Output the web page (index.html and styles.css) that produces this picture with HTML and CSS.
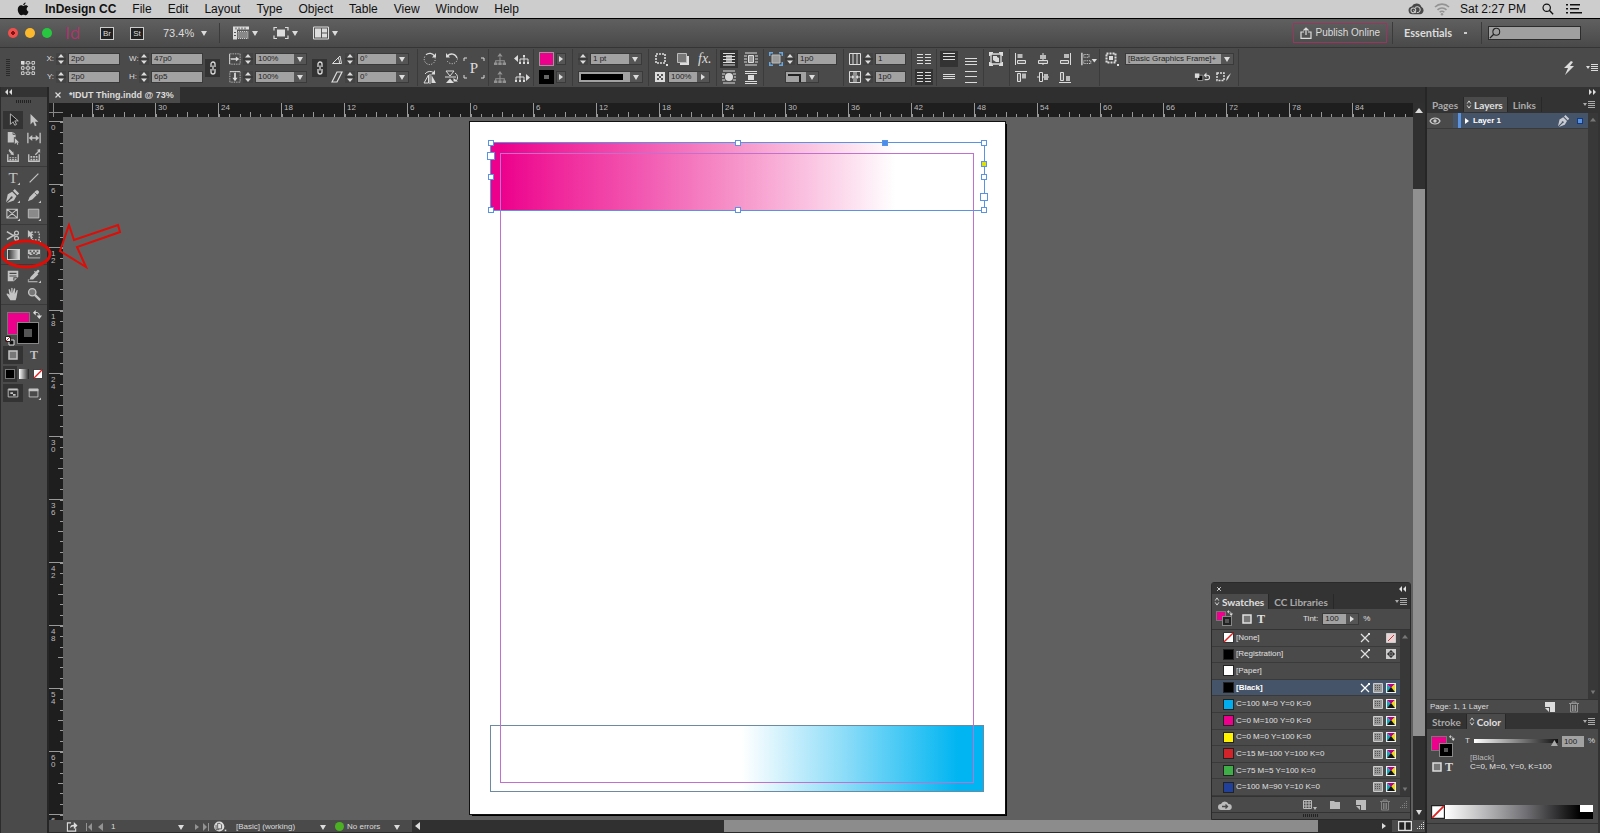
FILE: index.html
```html
<!DOCTYPE html>
<html lang="en">
<head>
    <meta charset="UTF-8">
    <meta name="viewport" content="width=device-width, initial-scale=1.0">
    <title>IDUT Thing.indd</title>
    <link rel="stylesheet" href="styles.css">
</head>
<body>

<!-- icon set -->
<svg class="sprite" aria-hidden="true">
    <symbol id="apple" viewBox="0 0 16 16"><path d="M11 .5c.1 1.600-1.300 3-2.800 3C8 2 9.500.7 11 .5zM8.300 4.500c.7 0 1.500-.8 2.900-.8 1.200 0 2.200.7 2.700 1.500-2.500 1.400-2.100 4.800.4 5.800-.6 1.800-2 4.200-3.300 4.200-.9 0-1.300-.6-2.500-.6s-1.600.6-2.500.6C4 15.200 2 11.700 2 8.700c0-3 1.900-4.900 3.800-4.900 1.100 0 1.800.7 2.500.7z"/></symbol>
    <symbol id="cc" viewBox="0 0 18 14"><path d="M5 13a4.500 4.500 0 0 1-.8-8.900A6 6 0 0 1 15 4.500 4.500 4.500 0 0 1 13.500 13z"/><g fill="none" stroke="#cdcdcd" stroke-width="1.200"><circle cx="6" cy="8.500" r="2.700"/><path d="M6 8.500l3 2.500M8 5.500a3.300 3.300 0 1 1 2 5.500"/></g></symbol>
    <symbol id="wifi" viewBox="0 0 16 13"><g fill="none" stroke="currentColor" stroke-width="1.600"><path d="M1 4.500a10 10 0 0 1 14 0M3.500 7.300a6.500 6.500 0 0 1 9 0M5.700 9.800a3.200 3.200 0 0 1 4.600 0"/></g><circle cx="8" cy="11.800" r="1.200"/></symbol>
    <symbol id="lens" viewBox="0 0 14 14"><circle cx="5.500" cy="5.500" r="4.300" fill="none" stroke="currentColor" stroke-width="1.400"/><path d="M8.500 8.500l4.500 4.500" stroke="currentColor" stroke-width="1.600"/></symbol>
    <symbol id="lens-left" viewBox="0 0 14 14"><circle cx="8.500" cy="5.500" r="4" fill="none" stroke="currentColor" stroke-width="1.200"/><path d="M5.500 8.500L1 13" stroke="currentColor" stroke-width="1.500"/></symbol>
    <symbol id="list" viewBox="0 0 16 12"><path d="M0 1h2v1.500H0zM4 1h10v1.500H4zM0 5h2v1.500H0zM4 5h9v1.500H4zM0 9h2v1.500H0zM4 9h12v1.500H4z"/></symbol>
    <symbol id="view-opts" viewBox="0 0 16 13"><path d="M0 0h16v3H4v10H0z"/><path d="M3 3v-2M6 3V1M9 3V1M12 3V1M1 6h2M1 9h2" stroke="#555"/><path d="M5 5h10v7H5z" fill="#888" stroke="#ccc" stroke-dasharray="1 1"/></symbol>
    <symbol id="screen-mode" viewBox="0 0 16 13"><path d="M4 3h8v7H4z"/><path d="M1 4V1h3M12 1h3v3M15 9v3h-3M4 12H1V9" fill="none" stroke="currentColor" stroke-width="1.200"/></symbol>
    <symbol id="arrange" viewBox="0 0 16 13"><path d="M.5.500h15v12H.5z" fill="none" stroke="currentColor"/><path d="M2 2h6v9H2zM9 2h5v4H9zM9 7h5v4H9z"/></symbol>
    <symbol id="share" viewBox="0 0 12 12"><path d="M4 5H1v6.300h10V5H8M6 8V1M3.500 3.500L6 1l2.500 2.500" fill="none" stroke="currentColor" stroke-width="1.200"/></symbol>
    <symbol id="export" viewBox="0 0 12 12"><path d="M5 2H1v9h9V8" fill="none" stroke="currentColor" stroke-width="1.200"/><path d="M4 8c0-3 1-4 4-4V1l4 4-4 4V6C6 6 5 6.500 4 8z"/></symbol>
    <symbol id="refpoint" viewBox="0 0 16 16"><g fill="none" stroke="currentColor"><path d="M2.500 2.500h11v11h-11zM2.500 8h11M8 2.500v11" stroke-dasharray="1 1"/><path d="M6.500.500h3v3h-3zM12.500.500h3v3h-3zM.5 6.500h3v3h-3zM6.500 6.500h3v3h-3zM12.500 6.500h3v3h-3zM.5 12.500h3v3h-3zM6.500 12.500h3v3h-3zM12.500 12.500h3v3h-3z" fill="#4a4a4a"/></g><path d="M0 0h4v4H0z"/></symbol>
    <symbol id="spin" viewBox="0 0 10 12"><path d="M5 1l3 3.500H2zM5 11L2 7.500h6z"/><path d="M0 6h10" stroke="#333"/></symbol>
    <symbol id="down" viewBox="0 0 8 8"><path d="M1 2h6L4 7z"/></symbol>
    <symbol id="up" viewBox="0 0 8 8"><path d="M0 6h8L4 1z"/></symbol>
    <symbol id="right" viewBox="0 0 8 8"><path d="M2 1v6l4-3z"/></symbol>
    <symbol id="left" viewBox="0 0 8 8"><path d="M6 0v8L1 4z"/></symbol>
    <symbol id="first" viewBox="0 0 8 8"><path d="M1 0h1v8H1zM7 0v8L3 4z"/></symbol>
    <symbol id="last" viewBox="0 0 8 8"><path d="M6 0h1v8H6zM1 0v8l4-4z"/></symbol>
    <symbol id="chain" viewBox="0 0 8 14"><g fill="none" stroke="currentColor" stroke-width="1.300"><path d="M2 6V3a2 2 0 0 1 4 0v3M2 8v3a2 2 0 0 0 4 0V8M4 4.500v5"/></g></symbol>
    <symbol id="scale-x" viewBox="0 0 14 14"><path d="M.5 1v12" stroke="currentColor"/><path d="M1 1h12v12H1z" fill="none" stroke="currentColor" stroke-dasharray="1 1"/><path d="M2 6h6V4l4 3-4 3V8H2z"/></symbol>
    <symbol id="scale-y" viewBox="0 0 14 14"><path d="M1 .5h12" stroke="currentColor"/><path d="M1 1h12v12H1z" fill="none" stroke="currentColor" stroke-dasharray="1 1"/><path d="M6 2v6H4l3 4 3-4H8V2z"/></symbol>
    <symbol id="angle" viewBox="0 0 12 12"><path d="M10.500 10.500h-9L9 3zM7 5a7 7 0 0 1 1.500 5" fill="none" stroke="currentColor"/></symbol>
    <symbol id="shear" viewBox="0 0 12 12"><path d="M1 11L6 1h5L6 11z" fill="none" stroke="currentColor" stroke-width="1.200"/></symbol>
    <symbol id="rot-cw" viewBox="0 0 14 14"><path d="M3 2.800A5.500 5.500 0 0 1 11.500 4" fill="none" stroke="currentColor" stroke-width="1.300"/><path d="M12 5.500a5.500 5.500 0 1 1-9.500-2" fill="none" stroke="currentColor" stroke-dasharray="1 1.500"/><path d="M13 1v4.500H9z"/></symbol>
    <symbol id="rot-ccw" viewBox="0 0 14 14"><path d="M2.500 4A5.500 5.500 0 0 1 12 6" fill="none" stroke="currentColor" stroke-width="1.300"/><path d="M12.500 6.500a5.500 5.500 0 0 1-10.500 2" fill="none" stroke="currentColor" stroke-dasharray="1 1.500"/><path d="M1 1v4.500h4z"/></symbol>
    <symbol id="flip-h" viewBox="0 0 14 14"><path d="M5.500 5v8H1zM7 4v10" fill="none" stroke="currentColor"/><path d="M8.500 5v8H13z"/><path d="M2 4a6 6 0 0 1 9-1" fill="none" stroke="currentColor"/><path d="M12 0v4.500H8z"/></symbol>
    <symbol id="flip-v" viewBox="0 0 14 14"><path d="M1 1h8L5 6zM0 7h11" fill="none" stroke="currentColor"/><path d="M1 13h8L5 8.500z"/><path d="M10 3a5 5 0 0 1 1 8" fill="none" stroke="currentColor"/><path d="M13 11.500H8.500V8z"/></symbol>
    <symbol id="flip-frame" viewBox="0 0 22 22"><path d="M1 4V1h3M18 1h3v3M21 18v3h-3M4 21H1v-3" fill="none" stroke="currentColor"/></symbol>
    <symbol id="tree" viewBox="0 0 14 14"><path d="M7 5v4M2 12V9h10v3M7 9v3" fill="none" stroke="currentColor" stroke-width="1.200"/><path d="M7 0l3 4H4zM0 11h4v3H0zM5 11h4v3H5zM10 11h4v3h-4z"/></symbol>
    <symbol id="tree-prev" viewBox="0 0 16 12"><path d="M10 3v3M6 9V6h8v3M10 6v3" fill="none" stroke="currentColor"/><path d="M4 2v7L0 5.500zM9 2h2v2H9zM5 9h2v2H5zM9 9h2v2H9zM13 9h2v2h-2z"/></symbol>
    <symbol id="tree-next" viewBox="0 0 16 12"><path d="M6 3v3M2 9V6h8v3M6 6v3" fill="none" stroke="currentColor"/><path d="M12 3v7l4-3.500zM5 2h2v2H5zM1 9h2v2H1zM5 9h2v2H5zM9 9h2v2H9z"/></symbol>
    <symbol id="corner" viewBox="0 0 14 14"><path d="M2 2h9v9H2z" fill="none" stroke="currentColor" stroke-width="1.600" stroke-dasharray="2 1"/><path d="M12 12h2v2h-2z"/></symbol>
    <symbol id="shadow" viewBox="0 0 14 14"><path d="M4 4h9v9H4z" fill="#ddd"/><path d="M1.500 1.500h9v9h-9z" fill="#777" stroke="#bbb"/></symbol>
    <symbol id="checker" viewBox="0 0 12 12"><path d="M1 1h10v10H1z"/><path d="M3 3h2v2H3zM7 3h2v2H7zM5 5h2v2H5zM3 7h2v2H3zM7 7h2v2H7z" fill="#555"/></symbol>
    <symbol id="wrap-none" viewBox="0 0 14 14"><path d="M1 1.500h12M1 4.500h12M1 7.500h12M1 10.500h12M1 13h12" stroke="currentColor"/><path d="M4 3h6v8H4z" opacity=".7"/></symbol>
    <symbol id="wrap-box" viewBox="0 0 14 14"><path d="M1 1h12M1 13h12M0 4h3M0 7h3M0 10h3M11 4h3M11 7h3M11 10h3" stroke="currentColor"/><path d="M4.500 3.500h5v7h-5z" fill="#999" stroke="currentColor"/></symbol>
    <symbol id="wrap-shape" viewBox="0 0 14 14"><path d="M1 1h12M1 13h12M0 4h3M0 7h2M0 10h3M11 4h3M12 7h2M11 10h3" stroke="currentColor"/><circle cx="7" cy="7" r="4"/></symbol>
    <symbol id="wrap-jump" viewBox="0 0 14 14"><path d="M1 1.500h12M1 3.500h12M1 11.500h12M1 13.500h12" stroke="currentColor"/><path d="M4 5h6v5H4z"/></symbol>
    <symbol id="frame-fit" viewBox="0 0 14 14"><path d="M3 3h8v8H3z" fill="#999" stroke="#bbb"/><path d="M0 0h4v1.500H1.500V4H0zM10 0h4v4h-1.500V1.500H10zM0 10h1.500v2.500H4V14H0zM12.500 10H14v4h-4v-1.500h2.500z" fill="#6aa6dc"/></symbol>
    <symbol id="cols" viewBox="0 0 12 12"><path d="M.5.500h11v11H.5zM4 0v12M8 0v12" fill="none" stroke="currentColor"/></symbol>
    <symbol id="gutter" viewBox="0 0 12 12"><path d="M.5.500h11v11H.5zM5 0v12M7 0v12M1 6h4M7 6h4" fill="none" stroke="currentColor"/><path d="M3 4v4l2-2zM9 4v4L7 6z"/></symbol>
    <symbol id="para" viewBox="0 0 14 12"><path d="M0 1.500h6M0 4.500h6M0 7.500h6M0 10.500h6M8 1.500h6M8 4.500h6M8 7.500h6M8 10.500h6" stroke="currentColor"/></symbol>
    <symbol id="v-top" viewBox="0 0 14 12"><path d="M1 .5h12M1 3.500h12M1 6.500h12" stroke="currentColor"/></symbol>
    <symbol id="v-mid" viewBox="0 0 14 12"><path d="M1 3.500h12M1 5.500h12M1 7.500h12" stroke="currentColor"/></symbol>
    <symbol id="v-bot" viewBox="0 0 14 12"><path d="M1 5.500h12M1 8.500h12M1 11.500h12" stroke="currentColor"/></symbol>
    <symbol id="v-just" viewBox="0 0 14 12"><path d="M1 .5h12M1 5.500h12M1 11.500h12" stroke="currentColor"/></symbol>
    <symbol id="fit" viewBox="0 0 14 14"><path d="M2 2h10v10H2z" fill="none" stroke="currentColor" stroke-width="1.300"/><path d="M0 0h4v1L1 4H0zM10 0h4v4h-1l-3-3zM0 10h1l3 3v1H0zM13 10h1v4h-4v-1zM4 4h4v1l2 1v4H7L4 8z"/></symbol>
    <symbol id="al-left" viewBox="0 0 12 12"><path d="M.5 0v12" stroke="currentColor"/><path d="M2.500 1h5v4h-5z" fill="#bbb"/><path d="M2.500 7.500h8v3h-8z" fill="#666" stroke="currentColor"/></symbol>
    <symbol id="al-mid" viewBox="0 0 12 12"><path d="M6 0v12" stroke="currentColor"/><path d="M3 2h6v4H3z" fill="#bbb"/><path d="M1.500 7.500h9v3h-9z" fill="#666" stroke="currentColor"/></symbol>
    <symbol id="al-right" viewBox="0 0 12 12"><path d="M11.500 0v12" stroke="currentColor"/><path d="M5 1h5v4H5z" fill="#bbb"/><path d="M1.500 7.500h8v3h-8z" fill="#666" stroke="currentColor"/></symbol>
    <symbol id="al-top" viewBox="0 0 12 12"><path d="M0 .5h12" stroke="currentColor"/><path d="M7 2.500h4v5H7z" fill="#bbb"/><path d="M2.500 2.500h3v8h-3z" fill="#666" stroke="currentColor"/></symbol>
    <symbol id="al-center" viewBox="0 0 12 12"><path d="M0 6h12" stroke="currentColor"/><path d="M7 3h4v6H7z" fill="#bbb"/><path d="M2.500 1.500h3v9h-3z" fill="#444" stroke="currentColor"/></symbol>
    <symbol id="al-bot" viewBox="0 0 12 12"><path d="M0 11.500h12" stroke="currentColor"/><path d="M7 5h4v5H7z" fill="#bbb"/><path d="M1.500 1.500h3v8h-3z" fill="#666" stroke="currentColor"/></symbol>
    <symbol id="al-to" viewBox="0 0 18 14"><path d="M1 0v14" stroke="currentColor" stroke-width="1.500"/><path d="M3 2h6v3H3zM3 9h8v3H3z" fill="none" stroke="currentColor" stroke-width="1.200" stroke-dasharray="1 1"/><path d="M12 7h6l-3 4z"/></symbol>
    <symbol id="obj-style" viewBox="0 0 14 14"><path d="M1.500 1.500h9v9h-9z" fill="none" stroke="currentColor" stroke-width="2" stroke-dasharray="2 1"/><path d="M4 4h4v4H4zM12 12h2v2h-2z"/></symbol>
    <symbol id="clear-style" viewBox="0 0 18 10"><path d="M4 3h6v6H4z" fill="#111" stroke="#999"/><path d="M1 1h5v5H1z"/><path d="M12 3h3a2.200 2.200 0 0 1 0 5h-3" fill="none" stroke="currentColor" stroke-width="1.300"/><path d="M14 0v6l-3-3z"/></symbol>
    <symbol id="break-style" viewBox="0 0 16 10"><path d="M1 1h7v7.500H1z" fill="none" stroke="currentColor" stroke-width="1.500" stroke-dasharray="2 1"/><path d="M15 1l-3 6-2 2 1-4z"/></symbol>
    <symbol id="bolt" viewBox="0 0 12 14"><path d="M8 0L1 7h4l-3 7 9-9H7l3-4z"/></symbol>
    <symbol id="flyout" viewBox="0 0 12 8"><path d="M0 2h4L2 5zM5 0h7v1H5zM5 2h7v1H5zM5 4h7v1H5zM5 6h7v1H5z"/></symbol>
    <symbol id="collapse" viewBox="0 0 8 6"><path d="M3 0v6L0 3zM7 0v6L4 3z"/></symbol>
    <symbol id="expand" viewBox="0 0 8 6"><path d="M1 0v6l3-3zM5 0v6l3-3z"/></symbol>
    <symbol id="updown" viewBox="0 0 6 10"><path d="M1 4l2-3 2 3M1 6l2 3 2-3" fill="none" stroke="currentColor"/></symbol>
    <symbol id="close" viewBox="0 0 8 8"><path d="M1.500 1.500l5 5M6.500 1.500l-5 5" stroke="currentColor" stroke-width="1.200"/></symbol>

    <symbol id="t-select" viewBox="0 0 16 16"><path d="M5 1v12l3-3 2 4 2-1-2-4h4z" fill="#222" stroke="currentColor"/></symbol>
    <symbol id="t-direct" viewBox="0 0 16 16"><path d="M4 1v12l3-3 2 5 2-1-2-4h4z"/></symbol>
    <symbol id="t-page" viewBox="0 0 16 16"><path d="M2 1h6l3 3v3H9v6H2z"/><path d="M8 1v3h3" fill="none" stroke="#555"/><path d="M10 8v7l2-2 1 3 1-1-1-2h2z"/></symbol>
    <symbol id="t-gap" viewBox="0 0 16 16"><path d="M1 2v12M15 2v12M4 8h8" stroke="currentColor" stroke-width="1.500"/><path d="M2 8l4-3.500v7zM14 8l-4-3.500v7z"/></symbol>
    <symbol id="t-collect" viewBox="0 0 16 16"><path d="M2 6v8h12V6" fill="none" stroke="currentColor" stroke-width="1.500"/><path d="M4 9h2v1H4zM7 9h2v1H7zM10 9h2v1h-2zM4 11h2v2H4zM7 11h2v2H7zM10 11h2v2h-2zM4 0l4 4V2l1 5-5-1h2L3 2z"/></symbol>
    <symbol id="t-place" viewBox="0 0 16 16"><path d="M2 6v8h12V6" fill="none" stroke="currentColor" stroke-width="1.500"/><path d="M4 8h2v2H4zM7 8h2v2H7zM10 8h2v2h-2zM4 11h2v2H4zM7 11h2v2H7zM10 11h2v2h-2zM15 0v5l-1-2-4 4-1-1 4-4-2-1z"/></symbol>
    <symbol id="corner-mark" viewBox="0 0 16 16"><path d="M16 13v3h-3z"/></symbol>
    <symbol id="t-line" viewBox="0 0 16 16"><path d="M3 13L13 3" stroke="currentColor" stroke-width="1.500"/></symbol>
    <symbol id="t-pen" viewBox="0 0 16 16"><path d="M0 15l2-9 5-3 5 5-3 5-8 3 5-5a1.300 1.300 0 1 0-1-1zM8 2l2-2 5 5-2 2zM16 13v3h-3z"/></symbol>
    <symbol id="pen-nib" viewBox="0 0 16 16"><path d="M0 15l2-9 5-3 5 5-3 5-8 3 5-5a1.300 1.300 0 1 0-1-1zM8 2l2-2 5 5-2 2z"/></symbol>
    <symbol id="t-pencil" viewBox="0 0 16 16"><path d="M1 14l2-5 7-7c2-2 5 1 3 3l-7 7z" /><path d="M8.500 4l3 3" stroke="#555"/><path d="M16 13v3h-3z"/></symbol>
    <symbol id="t-frame" viewBox="0 0 16 16"><path d="M1 2.500h12v10H1zM1 2.500l12 10M13 2.500l-12 10" fill="none" stroke="currentColor" stroke-width="1.200"/><path d="M16 13v3h-3z"/></symbol>
    <symbol id="t-rect" viewBox="0 0 16 16"><path d="M1.500 2.500h12v10h-12z" fill="#8a8a8a" stroke="currentColor"/><path d="M16 13v3h-3z"/></symbol>
    <symbol id="t-scissors" viewBox="0 0 16 16"><path d="M1 3l9 5.500M1 12l9-5.500" stroke="currentColor" stroke-width="1.800"/><g fill="none" stroke="currentColor" stroke-width="1.400"><circle cx="12" cy="4.500" r="2.200"/><circle cx="12" cy="10.500" r="2.200"/></g></symbol>
    <symbol id="t-free" viewBox="0 0 16 16"><path d="M5 3.500h9v9H5z" fill="none" stroke="currentColor" stroke-width="1.500" stroke-dasharray="2 1.500"/><path d="M1 1v9l2-2 2 3 2-1-2-3h3zM16 13v3h-3z"/></symbol>
    <symbol id="t-feather" viewBox="0 0 16 16"><path d="M1 3h14v10H1z"/><path d="M3 4h2v2H3zM7 4h2v2H7zM11 4h2v2h-2zM5 6h2v2H5zM9 6h2v2H9zM1 8h2v2H1zM5 9l2-1h2l2 1 2-1h2v4H2V9z" fill="#555"/></symbol>
    <symbol id="t-note" viewBox="0 0 16 16"><path d="M2 2h12v7l-5 5H2z"/><path d="M4 5h8M4 8h8M9 13v-3h4" fill="none" stroke="#4a4a4a" stroke-width="1.200"/></symbol>
    <symbol id="t-dropper" viewBox="0 0 16 16"><path d="M3 12l1-3 5-5 3 3-5 5zM9 2l1 1 2-2c1-1 3 1 2 2l-2 2 1 1-1 1-4-4zM1 12l2 0-2 2h11v1H1zM16 13v3h-3z"/></symbol>
    <symbol id="t-hand" viewBox="0 0 16 16"><path d="M5 15L1 9c-1-2 1-2 2-1l1 1-1-6c0-1 1.300-1 1.500 0L6 7V1.500c0-1 1.500-1 1.500 0V7L9 2c.3-1 1.600-.7 1.500.3L10 8l2-4c.5-1 1.600-.5 1.300.5L12 12l-1 3z"/></symbol>
    <symbol id="t-zoom" viewBox="0 0 16 16"><circle cx="6" cy="6" r="4.200" fill="#777" stroke="currentColor" stroke-width="1.500"/><path d="M9 9l6 6" stroke="currentColor" stroke-width="2.600"/></symbol>
    <symbol id="swap" viewBox="0 0 10 10"><path d="M2 3c4-1 5 1 5 4" fill="none" stroke="currentColor"/><path d="M0 3l3-3v6zM4 6h6L7 10z"/></symbol>
    <symbol id="small-swatch" viewBox="0 0 10 10"><path d="M4 4h5v5H4z" fill="#111" stroke="#ddd"/><path d="M.5.500h5v5h-5z" fill="#fff" stroke="#222"/><path d="M1 5l4-4" stroke="#d22"/></symbol>
    <symbol id="box" viewBox="0 0 12 12"><path d="M2 2h8v8H2z" fill="#777" stroke="currentColor" stroke-width="1.500"/></symbol>
    <symbol id="none" viewBox="0 0 12 12"><path d="M.5.500h11v11H.5z" fill="#fff" stroke="#222"/><path d="M1 11L11 1" stroke="#d22" stroke-width="1.600"/></symbol>
    <symbol id="mode-normal" viewBox="0 0 16 16"><path d="M2.500 3.500h11v9h-11z" fill="none" stroke="currentColor"/><path d="M3 3h10v2H3zM5 7h3v2H5zM8 9h3v2H8z"/></symbol>
    <symbol id="mode-preview" viewBox="0 0 16 16"><path d="M2.500 3.500h10v9h-10z" fill="none" stroke="currentColor"/><path d="M2 3h11v3H2zM16 13v3h-3z"/></symbol>

    <symbol id="eye" viewBox="0 0 12 10"><path d="M1 5c2-4 8-4 10 0-2 4-8 4-10 0z" fill="none" stroke="currentColor" stroke-width="1.200"/><circle cx="6" cy="5" r="1.700"/></symbol>
    <symbol id="new" viewBox="0 0 12 10"><path d="M1 0h10v10H6V5H1z"/><path d="M1 6h4v4z"/></symbol>
    <symbol id="trash" viewBox="0 0 12 12"><path d="M1 2.500h10M4 2V1h4v1M2.500 3v8h7V3M4.500 4v6M6 4v6M7.500 4v6" fill="none" stroke="currentColor"/></symbol>
    <symbol id="cloud" viewBox="0 0 14 10"><path d="M3 10a3 3 0 0 1 0-6 4 4 0 0 1 7.500 0A3 3 0 0 1 11 10z"/><path d="M4 6.500h5M7.500 4.500l2 2-2 2" fill="none" stroke="#4a4a4a" stroke-width="1.300"/></symbol>
    <symbol id="grid" viewBox="0 0 14 10"><path d="M.5.500h8v8h-8zM3 0v9M6 0v9M0 3h9M0 6h9" fill="none" stroke="currentColor"/><path d="M10 7h4l-2 3z"/></symbol>
    <symbol id="folder" viewBox="0 0 12 10"><path d="M1 1h4l1 1h5v7H1z"/></symbol>
    <symbol id="no-edit" viewBox="0 0 10 10"><path d="M1 1l8 8M9 1L1 9" stroke="currentColor" stroke-width="1.200"/><path d="M8 0h2v2H8z"/></symbol>
    <symbol id="none-type" viewBox="0 0 10 10"><path d="M.5.500h9v9h-9z" fill="#e8d4d4" stroke="#ccc"/><path d="M2 8l6-6" stroke="#c33"/></symbol>
    <symbol id="registration" viewBox="0 0 10 10"><path d="M0 0h10v10H0z" fill="#ccc"/><circle cx="5" cy="5" r="2.500" fill="none" stroke="#222"/><path d="M5 1v8M1 5h8" stroke="#222"/></symbol>
    <symbol id="process" viewBox="0 0 10 10"><path d="M.5.500h9v9h-9z" fill="#999" stroke="#ccc"/><path d="M2 2.500h6M2 4.500h6M2 6.500h6" stroke="#555" stroke-dasharray="1 1"/></symbol>
    <symbol id="cmyk" viewBox="0 0 10 10"><path d="M0 0h10v10H0z" fill="#eee"/><path d="M1 1l4 4-4 4z" fill="#1ab"/><path d="M1 1h8L5 5z" fill="#b08"/><path d="M9 1v8L5 5z" fill="#ed0"/><path d="M1 9h8L5 4z" fill="#111"/></symbol>
    <symbol id="doc-sync" viewBox="0 0 16 14"><circle cx="7" cy="7" r="6.500"/><path d="M5 3h3l2 2v5H5zM3 5v6h4" fill="none" stroke="#444"/><path d="M14 11h2v2h-2z"/></symbol>
    <symbol id="split" viewBox="0 0 14 10"><path d="M.5.500h13v9H.5zM7 0v10" fill="#222" stroke="currentColor" stroke-width="1.500"/></symbol>
    <symbol id="grip" viewBox="0 0 8 8"><path d="M6 0h1v1H6zM4 2h1v1H4zM6 2h1v1H6zM2 4h1v1H2zM4 4h1v1H4zM6 4h1v1H6zM0 6h1v1H0zM2 6h1v1H2zM4 6h1v1H4zM6 6h1v1H6z"/></symbol>
</svg>

<header class="menubar">
    <svg class="icon apple"><use href="#apple"/></svg>
    <nav>
        <a class="app" href="#">InDesign CC</a>
        <a href="#">File</a>
        <a href="#">Edit</a>
        <a href="#">Layout</a>
        <a href="#">Type</a>
        <a href="#">Object</a>
        <a href="#">Table</a>
        <a href="#">View</a>
        <a href="#">Window</a>
        <a href="#">Help</a>
    </nav>
    <div class="tray">
        <svg class="icon dim"><use href="#cc"/></svg>
        <svg class="icon pale"><use href="#wifi"/></svg>
        <span>Sat 2:27 PM</span>
        <svg class="icon s12"><use href="#lens"/></svg>
        <svg class="icon"><use href="#list"/></svg>
    </div>
</header>

<div class="appbar">
    <div class="lights"><i class="red"></i><i class="amber"></i><i class="green"></i></div>
    <span class="logo">Id</span>
    <button class="bridge">Br</button>
    <button class="bridge">St</button>
    <label class="zoom"><select aria-label="Zoom level"><option>73.4%</option></select><svg class="icon s8"><use href="#down"/></svg></label>
    <div class="views">
        <button aria-label="View options"><svg class="icon"><use href="#view-opts"/></svg><svg class="icon s8"><use href="#down"/></svg></button>
        <button aria-label="Screen mode"><svg class="icon"><use href="#screen-mode"/></svg><svg class="icon s8"><use href="#down"/></svg></button>
        <button aria-label="Arrange documents"><svg class="icon"><use href="#arrange"/></svg><svg class="icon s8"><use href="#down"/></svg></button>
    </div>
    <button class="publish"><svg class="icon s12"><use href="#share"/></svg>Publish Online</button>
    <button class="workspace">Essentials<i></i></button>
    <label class="search"><svg class="icon s12"><use href="#lens-left"/></svg><input type="text" aria-label="Search"></label>
</div>

<div class="control">
    <div class="group mid"><i class="handle"></i></div>
    <div class="group mid"><svg class="icon"><use href="#refpoint"/></svg></div>
    <div class="group">
        <div class="row"><label for="x">X:</label><button class="spin" aria-label="Step X"><svg><use href="#spin"/></svg></button><input id="x" value="2p0"></div>
        <div class="row"><label for="y">Y:</label><button class="spin" aria-label="Step Y"><svg><use href="#spin"/></svg></button><input id="y" value="2p0"></div>
    </div>
    <div class="group">
        <div class="row"><label for="w">W:</label><button class="spin" aria-label="Step W"><svg><use href="#spin"/></svg></button><input id="w" value="47p0"></div>
        <div class="row"><label for="h">H:</label><button class="spin" aria-label="Step H"><svg><use href="#spin"/></svg></button><input id="h" value="6p5"></div>
    </div>
    <div class="group mid"><button class="chain" aria-label="Constrain size"><svg><use href="#chain"/></svg></button></div>
    <div class="group">
        <div class="row"><svg class="icon s12"><use href="#scale-x"/></svg><button class="spin" aria-label="Step scale X"><svg><use href="#spin"/></svg></button><span class="combo"><select aria-label="Scale X"><option>100%</option></select><svg><use href="#down"/></svg></span></div>
        <div class="row"><svg class="icon s12"><use href="#scale-y"/></svg><button class="spin" aria-label="Step scale Y"><svg><use href="#spin"/></svg></button><span class="combo"><select aria-label="Scale Y"><option>100%</option></select><svg><use href="#down"/></svg></span></div>
    </div>
    <div class="group mid"><button class="chain" aria-label="Constrain scale"><svg><use href="#chain"/></svg></button></div>
    <div class="group">
        <div class="row"><svg class="icon s12"><use href="#angle"/></svg><button class="spin" aria-label="Step rotation"><svg><use href="#spin"/></svg></button><span class="combo"><select aria-label="Rotation"><option>0°</option></select><svg><use href="#down"/></svg></span></div>
        <div class="row"><svg class="icon s12"><use href="#shear"/></svg><button class="spin" aria-label="Step shear"><svg><use href="#spin"/></svg></button><span class="combo"><select aria-label="Shear"><option>0°</option></select><svg><use href="#down"/></svg></span></div>
    </div>
    <div class="group line spread">
        <div class="row"><svg class="icon s14"><use href="#rot-cw"/></svg><svg class="icon s14"><use href="#rot-ccw"/></svg></div>
        <div class="row"><svg class="icon s14"><use href="#flip-h"/></svg><svg class="icon s14"><use href="#flip-v"/></svg></div>
    </div>
    <div class="group mid flip"><svg class="icon s22"><use href="#flip-frame"/></svg><span>P</span></div>
    <div class="group line spread">
        <div class="row"><svg class="icon s12 faint"><use href="#tree"/></svg><svg class="icon"><use href="#tree-prev"/></svg></div>
        <div class="row"><svg class="icon s12 faint"><use href="#tree"/></svg><svg class="icon"><use href="#tree-next"/></svg></div>
    </div>
    <div class="group line">
        <div class="row"><button class="fill" aria-label="Fill"></button><button class="more" aria-label="Fill swatches"><svg><use href="#right"/></svg></button></div>
        <div class="row"><button class="fill stroke" aria-label="Stroke"></button><button class="more" aria-label="Stroke swatches"><svg><use href="#right"/></svg></button></div>
    </div>
    <div class="group line">
        <div class="row"><button class="spin" aria-label="Step weight"><svg><use href="#spin"/></svg></button><span class="combo"><select aria-label="Weight"><option>1 pt</option></select><svg><use href="#down"/></svg></span></div>
        <div class="row"><button class="linetype" aria-label="Stroke type"><i></i><svg><use href="#down"/></svg></button></div>
    </div>
    <div class="group line">
        <div class="row wide"><svg class="icon s14"><use href="#corner"/></svg><svg class="icon s14"><use href="#shadow"/></svg><em>fx.</em></div>
        <div class="row"><svg class="icon s12"><use href="#checker"/></svg><span class="combo short"><select aria-label="Opacity"><option>100%</option></select><svg><use href="#right"/></svg></span></div>
    </div>
    <div class="group line spread">
        <div class="row"><svg class="icon s14 on"><use href="#wrap-none"/></svg><svg class="icon s14"><use href="#wrap-box"/></svg></div>
        <div class="row"><svg class="icon s14"><use href="#wrap-shape"/></svg><svg class="icon s14"><use href="#wrap-jump"/></svg></div>
    </div>
    <div class="group line">
        <div class="row"><svg class="icon s14"><use href="#frame-fit"/></svg><button class="spin" aria-label="Step corner"><svg><use href="#spin"/></svg></button><input class="mid-field" aria-label="Corner size" value="1p0"></div>
        <div class="row end"><button class="cornertype" aria-label="Corner shape"><i></i><svg><use href="#down"/></svg></button></div>
    </div>
    <div class="group line">
        <div class="row"><svg class="icon s12"><use href="#cols"/></svg><button class="spin" aria-label="Step columns"><svg><use href="#spin"/></svg></button><input class="small-field" aria-label="Columns" value="1"></div>
        <div class="row"><svg class="icon s12"><use href="#gutter"/></svg><button class="spin" aria-label="Step gutter"><svg><use href="#spin"/></svg></button><input class="small-field" aria-label="Gutter" value="1p0"></div>
    </div>
    <div class="group line">
        <div class="row"><svg class="icon h12"><use href="#para"/></svg></div>
        <div class="row"><svg class="icon h12 on"><use href="#para"/></svg></div>
    </div>
    <div class="group line spread">
        <div class="row"><svg class="icon h12 on"><use href="#v-top"/></svg><svg class="icon h12"><use href="#v-bot"/></svg></div>
        <div class="row"><svg class="icon h12"><use href="#v-mid"/></svg><svg class="icon h12"><use href="#v-just"/></svg></div>
    </div>
    <div class="group line">
        <div class="row"><svg class="icon s14"><use href="#fit"/></svg></div>
    </div>
    <div class="group line align">
        <div class="row"><svg class="icon s12"><use href="#al-left"/></svg><svg class="icon s12"><use href="#al-mid"/></svg><svg class="icon s12"><use href="#al-right"/></svg><svg class="icon"><use href="#al-to"/></svg></div>
        <div class="row"><svg class="icon s12"><use href="#al-top"/></svg><svg class="icon s12"><use href="#al-center"/></svg><svg class="icon s12"><use href="#al-bot"/></svg></div>
    </div>
    <div class="group line styles">
        <div class="row"><svg class="icon s14"><use href="#obj-style"/></svg><span class="combo long"><select aria-label="Object style"><option>[Basic Graphics Frame]+</option></select><svg><use href="#down"/></svg></span></div>
        <div class="row right"><svg class="icon"><use href="#clear-style"/></svg><svg class="icon"><use href="#break-style"/></svg></div>
    </div>
    <div class="group line"></div>
    <div class="group mid quick"><svg class="icon s14"><use href="#bolt"/></svg><svg class="icon s12"><use href="#flyout"/></svg></div>
</div>

<div class="work">
    <aside class="tools">
        <div class="strip"><svg class="icon s8"><use href="#collapse"/></svg></div>
        <i class="handle flat"></i>
        <div class="toolset">
            <button class="active" aria-label="Selection"><svg><use href="#t-select"/></svg></button><button aria-label="Direct selection"><svg><use href="#t-direct"/></svg></button>
            <button aria-label="Page"><svg><use href="#t-page"/></svg></button><button aria-label="Gap"><svg><use href="#t-gap"/></svg></button>
            <button aria-label="Content collector"><svg><use href="#t-collect"/></svg></button><button aria-label="Content placer"><svg><use href="#t-place"/></svg></button>
        </div>
        <div class="toolset">
            <button class="type" aria-label="Type"><b class="serif">T</b><svg><use href="#corner-mark"/></svg></button><button aria-label="Line"><svg><use href="#t-line"/></svg></button>
            <button aria-label="Pen"><svg><use href="#t-pen"/></svg></button><button aria-label="Pencil"><svg><use href="#t-pencil"/></svg></button>
            <button aria-label="Rectangle frame"><svg><use href="#t-frame"/></svg></button><button aria-label="Rectangle"><svg><use href="#t-rect"/></svg></button>
        </div>
        <div class="toolset">
            <button aria-label="Scissors"><svg><use href="#t-scissors"/></svg></button><button aria-label="Free transform"><svg><use href="#t-free"/></svg></button>
            <button aria-label="Gradient swatch"><i class="gradient"></i></button><button aria-label="Gradient feather"><svg><use href="#t-feather"/></svg></button>
        </div>
        <div class="toolset">
            <button aria-label="Note"><svg><use href="#t-note"/></svg></button><button aria-label="Eyedropper"><svg><use href="#t-dropper"/></svg></button>
            <button aria-label="Hand"><svg><use href="#t-hand"/></svg></button><button aria-label="Zoom"><svg><use href="#t-zoom"/></svg></button>
        </div>
        <div class="colors">
            <i class="chip-fill"></i><i class="chip-stroke"></i>
            <svg class="swap"><use href="#swap"/></svg>
            <svg class="reset"><use href="#small-swatch"/></svg>
        </div>
        <div class="toolset modes">
            <button class="active" aria-label="Formatting affects container"><svg class="s12"><use href="#box"/></svg></button><button aria-label="Formatting affects text"><b class="serif">T</b></button>
        </div>
        <div class="apply">
            <button class="active" aria-label="Apply color"><i class="solid"></i></button><button aria-label="Apply gradient"><i class="fade"></i></button><button aria-label="Apply none"><svg><use href="#none"/></svg></button>
        </div>
        <div class="toolset modes">
            <button class="active" aria-label="Normal"><svg><use href="#mode-normal"/></svg></button><button aria-label="Preview"><svg><use href="#mode-preview"/></svg></button>
        </div>
        <!-- callout round the gradient tools -->
        <svg class="callout" viewBox="0 0 124 60">
            <ellipse cx="25" cy="34" rx="24" ry="13" stroke-width="3"/>
            <path d="M59 31L68 5l5 15 44-15 2 7-43 15 9 20z" stroke-width="2"/>
        </svg>
    </aside>

    <main class="doc">
        <div class="tabs"><div class="tab"><svg class="icon s8"><use href="#close"/></svg>*IDUT Thing.indd @ 73%</div></div>
        <div class="view">
            <i class="origin"></i>
            <div class="ruler-x" id="rulerX"></div>
            <div class="ruler-y" id="rulerY"></div>
            <div class="canvas">
                <div class="page">
                    <div class="frame magenta"></div>
                    <div class="frame cyan"></div>
                    <div class="margins"></div>
                    <div class="selection">
                        <i class="tl"></i><i class="tc"></i><i class="tr"></i>
                        <i class="ml"></i><i class="mr"></i>
                        <i class="bl"></i><i class="bc"></i><i class="br"></i>
                        <i class="in port"></i><i class="out port"></i>
                        <i class="anchor"></i><i class="corners"></i>
                    </div>
                </div>

                <section class="swatches">
                    <div class="strip"><svg class="icon s8"><use href="#close"/></svg><svg class="icon s8"><use href="#collapse"/></svg></div>
                    <div class="panel-tabs">
                        <button class="current"><svg class="updown"><use href="#updown"/></svg>Swatches</button><button>CC Libraries</button>
                        <svg class="icon s12 fly"><use href="#flyout"/></svg>
                    </div>
                    <div class="swatch-tools">
                        <span class="mini"><i class="chip-fill"></i><i class="chip-stroke"></i><svg class="swap"><use href="#swap"/></svg></span>
                        <svg class="icon s12"><use href="#box"/></svg><b class="serif">T</b>
                        <label for="tint">Tint:</label>
                        <span class="combo tint"><input id="tint" value="100"><svg><use href="#right"/></svg></span>
                        <span>%</span>
                    </div>
                    <div class="swatch-body">
                        <ul id="swatchList"></ul>
                        <div class="thin-scroll"><svg><use href="#up"/></svg><svg><use href="#down"/></svg></div>
                    </div>
                    <div class="swatch-foot">
                        <svg class="icon s14"><use href="#cloud"/></svg>
                        <svg class="icon s14"><use href="#grid"/></svg>
                        <svg class="icon s12"><use href="#folder"/></svg>
                        <svg class="icon s12"><use href="#new"/></svg>
                        <svg class="icon s12 faint"><use href="#trash"/></svg>
                        <svg class="icon s8 faint"><use href="#grip"/></svg>
                    </div>
                    <div class="swatch-end"><i class="handle flat"></i></div>
                </section>
            </div>
            <div class="vscroll"><svg><use href="#up"/></svg><i></i><svg><use href="#down"/></svg></div>
        </div>
        <footer class="status">
            <div class="status-left">
                <svg class="icon s12"><use href="#export"/></svg>
                <svg class="icon s8 faint"><use href="#first"/></svg>
                <svg class="icon s8 faint"><use href="#left"/></svg>
                <label class="pick"><select aria-label="Page"><option>1</option></select><svg class="icon s8"><use href="#down"/></svg></label>
                <svg class="icon s8 faint"><use href="#right"/></svg>
                <svg class="icon s8 faint"><use href="#last"/></svg>
                <svg class="icon s14"><use href="#doc-sync"/></svg>
                <label class="pick"><select aria-label="Preflight profile"><option>[Basic] (working)</option></select><svg class="icon s8"><use href="#down"/></svg></label>
                <i class="ok"></i>
                <label class="pick"><select aria-label="Preflight"><option>No errors</option></select><svg class="icon s8"><use href="#down"/></svg></label>
            </div>
            <div class="hscroll"><svg><use href="#left"/></svg><i></i><svg><use href="#right"/></svg></div>
            <svg class="icon s14"><use href="#split"/></svg>
            <svg class="icon s8"><use href="#grip"/></svg>
        </footer>
    </main>

    <aside class="dock">
        <div class="strip"><svg class="icon s8"><use href="#expand"/></svg></div>
        <div class="panel-tabs">
            <button>Pages</button><button class="current"><svg class="updown"><use href="#updown"/></svg>Layers</button><button>Links</button>
            <svg class="icon s12 fly"><use href="#flyout"/></svg>
        </div>
        <div class="layers">
            <div class="layer-list">
                <div class="layer">
                    <svg class="icon s12 dim"><use href="#eye"/></svg>
                    <i class="bar"></i>
                    <svg class="icon s8"><use href="#right"/></svg>
                    <b>Layer 1</b>
                    <svg class="icon s12 dim"><use href="#pen-nib"/></svg>
                    <i class="picked"></i>
                </div>
            </div>
            <div class="thin-scroll"><svg><use href="#up"/></svg><svg><use href="#down"/></svg></div>
        </div>
        <div class="layer-foot"><span>Page: 1, 1 Layer</span><svg class="icon s12"><use href="#new"/></svg><svg class="icon s12 faint"><use href="#trash"/></svg></div>
        <div class="panel-tabs">
            <button>Stroke</button><button class="current"><svg class="updown"><use href="#updown"/></svg>Color</button>
            <svg class="icon s12 fly"><use href="#flyout"/></svg>
        </div>
        <div class="color">
            <div class="color-left">
                <span class="mini large"><i class="chip-fill"></i><i class="chip-stroke"></i><svg class="swap"><use href="#swap"/></svg></span>
                <span class="pair"><svg class="icon s12"><use href="#box"/></svg><b class="serif">T</b></span>
            </div>
            <div class="color-main">
                <div class="slider"><label for="t">T</label><input type="range" id="t" min="0" max="100" value="100"><input class="value" aria-label="Tint value" value="100"><span>%</span></div>
                <p>[Black]</p>
                <p class="mix">C=0, M=0, Y=0, K=100</p>
            </div>
            <div class="ramp"><svg preserveAspectRatio="none"><use href="#none"/></svg><i class="fade"></i><span><i></i><i></i></span></div>
        </div>
        <div class="dock-end"></div>
    </aside>
</div>

<script src="script.js"></script>
</body>
</html>
```

FILE: styles.css
```css
* {
    box-sizing: border-box;
}
html, body {
    height: 100%;
}
body {
    margin: 0;
    display: flex;
    flex-direction: column;
    overflow: hidden;
    background: #4a4a4a;
    color: #dcdcdc;
    font-family: "Liberation Sans", Arial, sans-serif;
    font-size: 8px;
    line-height: 12px;
}
button, input, select {
    margin: 0;
    padding: 0;
    border: 0;
    border-radius: 0;
    background: none;
    color: inherit;
    font: inherit;
    appearance: none;
}
a {
    color: inherit;
    text-decoration: none;
}
i, em {
    display: block;
}
svg {
    display: block;
    fill: currentColor;
    flex: none;
}
p, ul {
    margin: 0;
    padding: 0;
    list-style: none;
}
.sprite {
    position: absolute;
    width: 0;
    height: 0;
}
.icon { width: 16px; height: 14px; }
.s8 { width: 8px; height: 8px; }
.s12 { width: 12px; height: 12px; }
.s14 { width: 14px; height: 14px; }
.s22 { width: 22px; height: 22px; }
.h12 { width: 14px; height: 12px; }
.faint { opacity: .5; }
.pale { opacity: .3; }
.dim { opacity: .7; }
.serif {
    font-family: "Liberation Serif", serif;
    font-size: 12px;
}

/* system menu bar */
.menubar {
    flex: none;
    display: flex;
    align-items: center;
    height: 19px;
    padding: 0 18px 0 15px;
    background: #cdcdcd;
    border-bottom: 1px solid #000;
    color: #111;
    font-size: 12px;
    line-height: 18px;
}
.menubar nav {
    display: flex;
    gap: 16px;
    margin-left: 14px;
}
.menubar .app {
    font-weight: bold;
}
.tray {
    display: flex;
    align-items: center;
    gap: 10px;
    margin-left: auto;
}
.tray span {
    margin-right: 6px;
}
.tray .s12 {
    margin-right: 2px;
}

/* application bar */
.appbar {
    flex: none;
    display: flex;
    align-items: center;
    height: 29px;
    padding: 0 19px 0 8px;
    background: linear-gradient(#606060, #494949);
    border-bottom: 1px solid #353535;
    font-size: 11px;
}
.lights {
    display: flex;
    gap: 7px;
}
.lights i {
    width: 10px;
    height: 10px;
    border-radius: 50%;
}
.lights .red { background: radial-gradient(#801515 2px, #f0504c 2px); }
.lights .amber { background: #fdb92e; }
.lights .green { background: #27c840; }
.logo {
    width: 35px;
    margin-left: 13px;
    color: #b0346c;
    font-family: "Open Sans", sans-serif;
    font-size: 17px;
}
.bridge {
    width: 14px;
    height: 13px;
    margin-right: 16px;
    border: 1px solid #ccc;
    background: #222;
    font-size: 8px;
    line-height: 11px;
}
.zoom {
    display: flex;
    align-items: center;
    justify-content: space-between;
    width: 57px;
    padding-right: 11px;
    height: 20px;
    border-right: 1px solid #3b3b3b;
    margin-left: 3px;
}
.zoom select {
    width: 36px;
}
.views {
    display: flex;
    gap: 14px;
    margin-left: 13px;
}
.views button {
    display: flex;
    align-items: center;
    gap: 2px;
}
.publish {
    display: flex;
    align-items: center;
    gap: 4px;
    height: 20px;
    margin-left: auto;
    padding: 0 6px;
    border: 1px solid #96385e;
    font-size: 10px;
}
.workspace {
    display: flex;
    align-items: center;
    justify-content: space-between;
    width: 90px;
    height: 22px;
    margin: 0 6px 0 5px;
    padding: 0 14px 0 11px;
    border: solid #3b3b3b;
    border-width: 0 1px;
    font-family: Lato, sans-serif;
    font-size: 11px;
    font-weight: bold;
}
.workspace i {
    width: 3px;
    height: 2px;
    background: #ccc;
}
.search {
    display: flex;
    align-items: center;
    width: 93px;
    height: 14px;
    background: #a0a0a0;
    border: 1px solid #2c2c2c;
    color: #222;
}
.search input {
    width: 70px;
}

/* control bar */
.control {
    flex: none;
    display: grid;
    grid-template-columns: 14px 25px 83px 77px 23px 84px 18px 91px 42px 29px 45px 39px 76px 68px 47px 80px 68px 25px 47px 26px 90px 139px 1fr 44px;
    height: 39px;
    padding: 1px 2px;
}
.group {
    display: grid;
    grid-template-rows: 18px 18px;
    align-content: center;
    padding-left: 4px;
}
.group.mid {
    grid-template-rows: 36px;
    align-items: center;
}
.group.line {
    border-left: 1px solid #3b3b3b;
}
.group.flip {
    grid-template-columns: 22px;
    justify-items: center;
}
.flip > * {
    grid-area: 1 / 1;
}
.flip span {
    font-family: "Liberation Serif", serif;
    font-size: 15px;
}
.row {
    display: flex;
    align-items: center;
    gap: 2px;
    padding-left: 1px;
}
.spread .row {
    gap: 8px;
}
.row.wide {
    gap: 8px;
}
.align .row {
    gap: 10px;
}
.styles .row {
    gap: 6px;
}
.row.end, .row.right {
    justify-content: flex-end;
}
.row.end {
    padding-right: 24px;
}
.row.right {
    padding-right: 6px;
}
.row label {
    width: 8px;
    text-align: right;
    white-space: nowrap;
}
.row input {
    width: 52px;
    height: 12px;
    padding: 0 2px;
    border: 1px solid #3a3a3a;
    background: #a2a2a2;
    color: #222;
}
.row .mid-field { width: 40px; }
.row .small-field { width: 31px; }
.row em {
    font-family: "Liberation Serif", serif;
    font-size: 14px;
}
.on {
    background: #333;
    outline: 2px solid #333;
}
.spin {
    width: 10px;
    height: 12px;
    background: #434343;
}
.spin svg {
    width: 10px;
    height: 12px;
}
.combo {
    display: flex;
    width: 52px;
    height: 12px;
    border: 1px solid #3a3a3a;
    background: #555;
}
.combo select, .combo input {
    flex: 1;
    min-width: 0;
    height: 10px;
    padding: 0 2px;
    border: 0;
    background: #a2a2a2;
    color: #222;
    line-height: 10px;
}
.combo svg {
    width: 12px;
    height: 8px;
    margin-top: 1px;
}
.combo.short { width: 42px; }
.combo.long { width: 109px; }
.chain {
    display: grid;
    place-items: center;
    width: 15px;
    height: 18px;
    background: #333;
}
.chain svg {
    width: 8px;
    height: 14px;
}
.fill {
    width: 15px;
    height: 14px;
    background: #ec008c;
    border: 1px solid #999;
}
.fill.stroke {
    background: #666;
    border: 5px solid #000;
}
.more {
    width: 10px;
    height: 12px;
    border: 1px solid #3a3a3a;
    background: #555;
}
.more svg {
    width: 8px;
    height: 8px;
}
.linetype, .cornertype {
    display: flex;
    align-items: center;
    width: 65px;
    height: 12px;
    border: 1px solid #3a3a3a;
    background: #555;
}
.linetype i {
    width: 51px;
    height: 10px;
    border: 2px solid #a2a2a2;
    border-right-width: 7px;
    background: #000;
}
.linetype svg, .cornertype svg {
    width: 12px;
    height: 8px;
}
.cornertype {
    width: 34px;
}
.cornertype i {
    width: 20px;
    height: 10px;
    border: solid #a2a2a2;
    border-width: 2px 5px 0 2px;
    background: linear-gradient(#222 2px, transparent 2px), linear-gradient(270deg, #222 2px, #a2a2a2 2px);
}
.handle {
    width: 4px;
    height: 18px;
    background: repeating-linear-gradient(#2a2a2a 0 1px, transparent 1px 2px);
}
.handle.flat {
    width: 16px;
    height: 3px;
    margin: 3px auto 6px;
    background: repeating-linear-gradient(90deg, #222 0 1px, transparent 1px 2px);
}
.quick {
    grid-template-columns: 18px 18px;
    justify-content: space-between;
    justify-items: end;
}

/* work area */
.work {
    flex: 1;
    min-height: 0;
    display: flex;
    background: #262626;
}
.strip {
    flex: none;
    display: flex;
    align-items: center;
    justify-content: space-between;
    height: 10px;
    padding: 0 4px;
    background: #333;
}
.strip .icon {
    height: 6px;
}

.tools {
    position: relative;
    flex: none;
    display: flex;
    flex-direction: column;
    width: 47px;
    margin-right: 2px;
    border-left: 1px solid #2c2c2c;
    background: #4a4a4a;
}
.tools .handle {
    flex: none;
}
.toolset {
    display: grid;
    grid-template-columns: 20px 20px;
    grid-auto-rows: 18px;
    column-gap: 1px;
    padding: 2px 0 1px 2px;
    border-bottom: 1px solid #3a3a3a;
}
.toolset button, .apply button {
    display: grid;
    place-items: center;
    color: #c4c4c4;
}
.toolset svg {
    width: 14px;
    height: 14px;
}
.toolset .s12 {
    width: 12px;
    height: 12px;
}
.toolset .type > * {
    grid-area: 1 / 1;
}
.type .serif {
    font-size: 15px;
    font-weight: normal;
}
.tools .active {
    background: #333;
}
.gradient {
    width: 13px;
    height: 11px;
    border: 1px solid #ccc;
    background: linear-gradient(90deg, #333, #ddd);
}
.colors {
    position: relative;
    height: 38px;
    margin-top: 3px;
}
.colors i, .colors svg, .mini i, .mini svg {
    position: absolute;
}
.chip-fill {
    background: #ec008c;
    border: 1px solid #777;
}
.chip-stroke {
    background: #555;
    border: 7px solid #000;
    outline: 1px solid #888;
}
.colors .chip-fill {
    left: 6px;
    top: 4px;
    width: 23px;
    height: 23px;
}
.colors .chip-stroke {
    left: 17px;
    top: 15px;
    width: 20px;
    height: 20px;
    border-width: 6px;
}
.colors .swap {
    right: 5px;
    top: 2px;
    width: 9px;
    height: 9px;
}
.colors .reset {
    left: 4px;
    bottom: 0;
    width: 10px;
    height: 10px;
}
.modes {
    padding: 0 0 0 2px;
    border: 0;
}
.apply {
    display: grid;
    grid-template-columns: 14px 14px 14px;
    height: 16px;
    margin: 2px 0 2px 2px;
}
.apply i, .apply svg {
    width: 10px;
    height: 10px;
}
.solid {
    background: #000;
    border: 1px solid #777;
}
.fade {
    background: linear-gradient(90deg, #fff, #222);
}
.callout {
    position: absolute;
    left: 0;
    top: 133px;
    width: 124px;
    height: 60px;
    fill: none;
    stroke: #e00c06;
    z-index: 5;
}

/* document */
.doc {
    flex: 1;
    min-width: 0;
    display: flex;
    flex-direction: column;
}
.tabs {
    flex: none;
    height: 16px;
    background: #2f2f2f;
}
.tab {
    display: flex;
    align-items: center;
    gap: 7px;
    width: 131px;
    height: 16px;
    padding-left: 5px;
    background: #4a4a4a;
    font-size: 9px;
    font-weight: bold;
    white-space: nowrap;
}
.view {
    flex: 1;
    min-height: 0;
    display: grid;
    grid-template: 14px 1fr / 14px 1fr 12px;
}
.origin {
    background: linear-gradient(#888, #888) 0 9px / 100% 1px no-repeat, linear-gradient(#888, #888) 4px 0 / 1px 100% no-repeat, #1e1e1e;
}
.ruler-x, .ruler-y {
    display: flex;
    overflow: hidden;
    background: #1e1e1e;
    color: #bbb;
    font-size: 8px;
    line-height: 8px;
}
.ruler-x span {
    flex: 0 0 63px;
    padding: 1px 2px;
    border-left: 1px solid #999;
    background:
        repeating-linear-gradient(90deg, #999 0 1px, transparent 1px calc(100% / 6)) bottom / 100% 3px no-repeat,
        linear-gradient(#999, #999) 50% 100% / 1px 5px no-repeat;
}
.ruler-x span:first-child {
    margin-left: -34px;
}
.ruler-y {
    flex-direction: column;
}
.ruler-y span {
    flex: 0 0 63px;
    width: 14px;
    padding: 2px 8px 0 2px;
    border-top: 1px solid #999;
    word-break: break-all;
    line-height: 7px;
    background:
        repeating-linear-gradient(#999 0 1px, transparent 1px calc(100% / 6)) right / 3px 100% no-repeat,
        linear-gradient(#999, #999) 100% 50% / 5px 1px no-repeat;
}
.ruler-y span:first-child {
    margin-top: -59px;
}
.canvas {
    position: relative;
    overflow: hidden;
    background: #606060;
}
.vscroll {
    grid-column: 3;
    grid-row: 1 / 3;
    display: flex;
    flex-direction: column;
    align-items: center;
    background: #303030;
    padding: 4px 0;
}
.vscroll svg, .hscroll svg {
    width: 8px;
    height: 8px;
}
.vscroll i {
    flex: none;
    width: 12px;
    height: 547px;
    margin: 74px 0 auto;
    background: #909090;
}

/* objects on the pasteboard */
.page {
    position: absolute;
    left: 407px;
    top: 5px;
    width: 535px;
    height: 692px;
    outline: 1px solid #111;
    background: #fff;
    box-shadow: 2px 2px 0 #000;
}
.frame, .margins, .selection {
    position: absolute;
    left: 20px;
    width: 494px;
    height: 67px;
}
.frame.magenta {
    top: 21px;
    background: linear-gradient(90deg, #ec008c 2%, #f0259a 13%, #f25cb3 32%, #f691c8 49%, #fbcbe5 67%, #fff 82%);
}
.frame.cyan {
    top: 603px;
    border: 1px solid #6d8aa0;
    background: linear-gradient(90deg, #fff 51%, #8bdcf8 72%, #00b5f1 95%);
}
.margins {
    left: 30px;
    top: 31px;
    width: 474px;
    height: 630px;
    border: 1px solid #c170d0;
}
.selection {
    top: 20px;
    width: 495px;
    height: 69px;
    border: 1px solid #5b93e0;
}
.selection i {
    position: absolute;
    width: 6px;
    height: 6px;
    margin: -3px;
    border: 1px solid #5b93e0;
    background: #fff;
}
.selection .tl { left: 0; top: 0; }
.selection .tc { left: 50%; top: 0; }
.selection .tr { left: 100%; top: 0; }
.selection .ml { left: 0; top: 50%; }
.selection .mr { left: 100%; top: 50%; }
.selection .bl { left: 0; top: 100%; }
.selection .bc { left: 50%; top: 100%; }
.selection .br { left: 100%; top: 100%; }
.selection .port { width: 8px; height: 8px; margin: -4px; }
.selection .in { left: 0; top: 20%; }
.selection .out { left: 100%; top: 80%; }
.selection .anchor { left: 80%; top: 0; background: #4a8cf0; }
.selection .corners { left: 100%; top: 31%; background: #dce010; }

/* panels */
.panel-tabs {
    flex: none;
    display: flex;
    height: 15px;
    background: #333;
    color: #aaa;
    font-family: Lato, sans-serif;
    font-size: 10px;
    font-weight: bold;
}
.panel-tabs button {
    display: flex;
    align-items: center;
    gap: 2px;
    padding: 0 5px;
    border-right: 1px solid #282828;
}
.panel-tabs .current {
    padding: 0 4px 0 2px;
    background: #4a4a4a;
    color: #e0e0e0;
}
.updown {
    width: 6px;
    height: 9px;
}
.fly {
    height: 8px;
    margin: 4px 3px 0 auto;
}
.thin-scroll {
    display: flex;
    flex-direction: column;
    justify-content: space-between;
    align-items: center;
    width: 10px;
    padding: 4px 0;
    background: #383838;
    color: #777;
}
.thin-scroll svg {
    width: 6px;
    height: 6px;
}
.mini {
    position: relative;
    width: 21px;
    height: 18px;
}
.mini .chip-fill {
    left: 0;
    top: 1px;
    width: 10px;
    height: 10px;
}
.mini .chip-stroke {
    left: 7px;
    top: 7px;
    width: 8px;
    height: 8px;
    border: 2px solid #222;
}
.mini .swap {
    left: 11px;
    top: 0;
    width: 6px;
    height: 6px;
}
.mini.large {
    height: 24px;
}
.large .chip-fill {
    width: 16px;
    height: 15px;
}
.large .chip-stroke {
    left: 9px;
    top: 9px;
    width: 12px;
    height: 12px;
    border: 4px solid #000;
}
.large .swap {
    left: 18px;
}

.swatches {
    position: absolute;
    right: 2px;
    bottom: 0;
    width: 200px;
    border: 1px solid #2a2a2a;
    border-radius: 3px 3px 0 0;
    background: #4a4a4a;
    color: #e0e0e0;
}
.swatches .strip {
    height: 11px;
    padding: 0 3px;
}
.swatch-tools {
    display: flex;
    align-items: center;
    gap: 4px;
    height: 20px;
    padding-left: 4px;
}
.swatch-tools label {
    margin-left: 34px;
}
.combo.tint {
    width: 37px;
}
.swatch-body {
    display: flex;
    height: 167px;
    border-top: 1px solid #333;
}
.swatch-body ul {
    flex: 1;
    display: grid;
    grid-auto-rows: 1fr;
}
.swatch-body li {
    display: grid;
    grid-template-columns: 11px 1fr 11px 11px 11px;
    column-gap: 2px;
    align-items: center;
    padding: 0 3px 0 11px;
    border-bottom: 1px solid #3a3a3a;
}
.swatch-body li.chosen {
    background: #465469;
    color: #fff;
    font-weight: bold;
}
.swatch-body li svg {
    width: 10px;
    height: 10px;
}
.swatch-body li .chip, .swatch-body li svg:first-child {
    width: 11px;
    height: 11px;
}
.swatch-body li .chip {
    border: 1px solid #222;
}
.swatch-foot {
    display: grid;
    grid-template-columns: 85px 26px 26px 24px 21px 8px;
    align-items: center;
    height: 16px;
    padding-left: 6px;
    border-top: 1px solid #333;
    color: #bbb;
}
.swatch-end {
    height: 7px;
    border-top: 1px solid #333;
}
.swatch-end .handle.flat {
    margin: 1px auto;
}

/* status bar */
.status {
    flex: none;
    display: flex;
    align-items: center;
    height: 13px;
    border-bottom: 1px solid #2a2a2a;
    background: #4a4a4a;
}
.status > .icon {
    width: 14px;
    height: 10px;
    margin: 0 5px 0 6px;
}
.status > .s8 {
    width: 8px;
    height: 8px;
    margin: 0;
}
.status-left {
    display: grid;
    grid-template-columns: 19px 12px 14px 82px 9px 11px 23px 99px 12px 62px;
    align-items: center;
    width: 363px;
    padding: 1px 0 0 17px;
}
.pick {
    display: flex;
    align-items: center;
    justify-content: space-between;
    padding-right: 8px;
}
.pick .icon {
    margin-top: 1px;
}
.status-left .icon {
    max-height: 11px;
}
.ok {
    width: 9px;
    height: 9px;
    border-radius: 50%;
    background: #4cb023;
}
.hscroll {
    flex: 1;
    display: flex;
    align-items: center;
    height: 12px;
    padding: 0 4px 0 2px;
    background: #303030;
}
.hscroll i {
    width: 61%;
    height: 12px;
    margin: 0 auto 0 31%;
    background: #8c8c8c;
}

/* right dock */
.dock {
    flex: none;
    display: flex;
    flex-direction: column;
    width: 173px;
    margin-left: 2px;
    border-right: 2px solid #333;
    background: #4a4a4a;
}
.dock .strip {
    justify-content: flex-end;
    padding: 0 2px;
}
.layers {
    flex: 1;
    display: flex;
    border-top: 1px solid #333;
}
.layer-list {
    flex: 1;
}
.layer {
    display: grid;
    grid-template-columns: 24px 10px 8px 1fr 19px 7px;
    align-items: center;
    height: 16px;
    padding: 0 4px 0 2px;
    border-bottom: 1px solid #3a3a3a;
    background: linear-gradient(90deg, #4a4a4a 26px, #465469 26px);
    color: #fff;
}
.layer .bar {
    width: 3px;
    height: 15px;
    margin-left: 5px;
    background: #5b93e0;
}
.layer b {
    padding-left: 2px;
}
.picked {
    width: 6px;
    height: 6px;
    border: 1px solid #123a80;
    background: #5b93e0;
}
.layer-foot {
    display: grid;
    grid-template-columns: 1fr 24px 24px;
    align-items: center;
    height: 15px;
    padding: 0 6px 0 3px;
    border: solid #333;
    border-width: 1px 0;
}
.color {
    display: grid;
    grid-template: 69px 25px / 34px 1fr;
    padding: 0 2px 0 4px;
}
.color-left {
    padding-top: 6px;
}
.color-left .mini {
    display: block;
}
.pair {
    display: flex;
    align-items: center;
    gap: 2px;
    margin-top: 2px;
}
.slider {
    display: flex;
    align-items: center;
    gap: 4px;
    height: 24px;
}
.slider input[type=range] {
    width: 84px;
    height: 12px;
    background: linear-gradient(90deg, #fff, #111) 0 4px / 100% 4px no-repeat;
}
input[type=range]::-webkit-slider-thumb {
    appearance: none;
    width: 7px;
    height: 6px;
    margin-top: 4px;
    background: #aaa;
    clip-path: polygon(50% 0, 100% 100%, 0 100%);
}
.slider .value {
    width: 22px;
    height: 11px;
    padding-left: 2px;
    background: #a2a2a2;
    color: #222;
    line-height: 11px;
}
.color-main p {
    padding-left: 5px;
    line-height: 9px;
    color: #bbb;
}
.color-main p.mix {
    color: #e4e4e4;
}
.ramp {
    grid-column: 1 / 3;
    display: flex;
    height: 14px;
    margin: 7px 3px 0 0;
}
.ramp svg {
    width: 14px;
    height: 14px;
}
.ramp .fade {
    flex: 1;
    background: linear-gradient(90deg, #fff, #707074 60%, #000);
}
.ramp span i {
    width: 13px;
    height: 7px;
    background: #fff;
}
.ramp span i + i {
    background: #000;
}
.dock-end {
    height: 10px;
    border-top: 1px solid #333;
}
```

FILE: script.js
```js
// ruler numbers run outwards from the page's top left corner, in picas
// the first cell only carries ticks, its number is off the ruler
function fillRuler(id, from, to) {
    const ruler = document.getElementById(id);
    for (let n = from; n <= to; n += 6) {
        const span = document.createElement('span');
        if (n > from) span.textContent = Math.abs(n);
        ruler.appendChild(span);
    }
}

const swatches = [
    { name: '[None]', color: 'none', icons: ['no-edit', '', 'none-type'] },
    { name: '[Registration]', color: '#000', icons: ['no-edit', '', 'registration'] },
    { name: '[Paper]', color: '#fff', icons: [] },
    { name: '[Black]', color: '#000', icons: ['no-edit', 'process', 'cmyk'], chosen: true },
    { name: 'C=100 M=0 Y=0 K=0', color: '#00adef', icons: ['', 'process', 'cmyk'] },
    { name: 'C=0 M=100 Y=0 K=0', color: '#ec008c', icons: ['', 'process', 'cmyk'] },
    { name: 'C=0 M=0 Y=100 K=0', color: '#fff200', icons: ['', 'process', 'cmyk'] },
    { name: 'C=15 M=100 Y=100 K=0', color: '#d2232a', icons: ['', 'process', 'cmyk'] },
    { name: 'C=75 M=5 Y=100 K=0', color: '#3fae49', icons: ['', 'process', 'cmyk'] },
    { name: 'C=100 M=90 Y=10 K=0', color: '#21409a', icons: ['', 'process', 'cmyk'] }
];

function fillSwatches() {
    const list = document.getElementById('swatchList');
    swatches.forEach(swatch => {
        const row = document.createElement('li');
        if (swatch.chosen) row.className = 'chosen';
        const chip = swatch.color === 'none'
            ? '<svg><use href="#none"/></svg>'
            : `<i class="chip" style="background:${swatch.color}"></i>`;
        const icons = swatch.icons.map(icon => icon ? `<svg><use href="#${icon}"/></svg>` : '<i></i>').join('');
        row.innerHTML = `${chip}<span>${swatch.name}</span>${icons}`;
        list.appendChild(row);
    });
}

fillRuler('rulerX', -42, 84);
fillRuler('rulerY', -6, 66);
fillSwatches();
```
